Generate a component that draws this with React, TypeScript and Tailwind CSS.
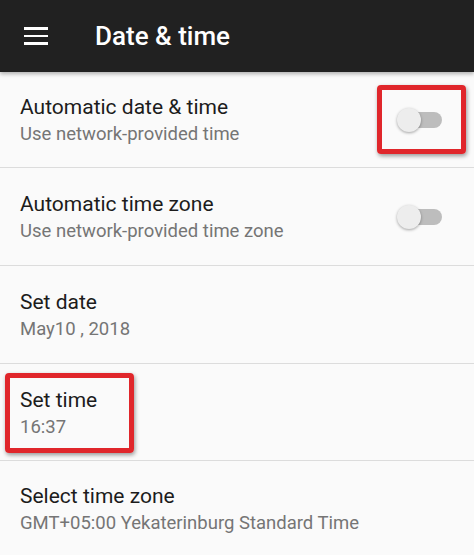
import React from 'react';

type Row = {
    title: string;
    summary: string;
    toggle?: boolean;
    height: string;
};

const rows: Row[] = [
    { title: 'Automatic date & time', summary: 'Use network-provided time', toggle: true, height: 'h-[96px]' },
    { title: 'Automatic time zone', summary: 'Use network-provided time zone', toggle: true, height: 'h-[98px]' },
    { title: 'Set date', summary: 'May10 , 2018', height: 'h-[98px]' },
    { title: 'Set time', summary: '16:37', height: 'h-[97px]' },
    { title: 'Select time zone', summary: 'GMT+05:00 Yekaterinburg Standard Time', height: 'h-[94px]' },
];

const Switch: React.FC = () => (
    <div className="relative w-[45px] h-[24px] flex items-center">
        <div className="absolute left-[6px] right-0 h-[16px] rounded-full bg-[#bdbdbd]" />
        <div className="absolute left-0 w-[24px] h-[24px] rounded-full bg-[#ededed] shadow-[0_1px_3px_rgba(0,0,0,0.35)]" />
    </div>
);

const SettingRow: React.FC<{ row: Row; last: boolean }> = ({ row, last }) => (
    <div className={`flex items-center ${row.height} pl-[20px] pr-[32px] ${last ? '' : 'border-b border-[#dcdcdc]'}`}>
        <div className="flex-1 flex flex-col pt-[2px]">
            <span className="text-[21px] leading-[27px] text-[#1c1c1c]">{row.title}</span>
            <span className="text-[18.5px] leading-[25px] text-[#757575] mt-[1px]">{row.summary}</span>
        </div>
        {row.toggle && <Switch />}
    </div>
);

export default function App() {
    return (
        <div className="relative w-[474px] h-[555px] overflow-hidden bg-[#fafafa] font-['Roboto',sans-serif]">
            <header className="flex items-center h-[72px] bg-[#212121] shadow-[0_2px_4px_rgba(0,0,0,0.3)] relative z-10">
                <div className="w-[24px] ml-[24px] flex flex-col gap-[5px]">
                    <div className="h-[2.5px] bg-white" />
                    <div className="h-[2.5px] bg-white" />
                    <div className="h-[2.5px] bg-white" />
                </div>
                <h1 className="ml-[47px] text-[26px] font-medium text-white">Date &amp; time</h1>
            </header>
            <div className="flex flex-col">
                {rows.map((row, i) => (
                    <SettingRow key={row.title} row={row} last={i === rows.length - 1} />
                ))}
            </div>

            {/* highlight boxes */}
            <div className="absolute left-[377px] top-[85px] w-[89px] h-[69px] rounded-[4px] border-[5px] border-[#e0262b] shadow-[1px_2px_4px_rgba(0,0,0,0.4)]" />
            <div className="absolute left-[5px] top-[373px] w-[129px] h-[80px] rounded-[4px] border-[5px] border-[#e0262b] shadow-[1px_2px_4px_rgba(0,0,0,0.4)]" />
        </div>
    );
}
